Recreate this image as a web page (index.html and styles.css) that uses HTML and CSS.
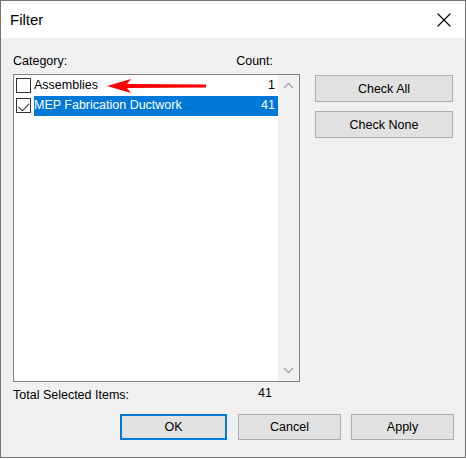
FILE: index.html
```html
<!DOCTYPE html>
<html>
<head>
<meta charset="utf-8">
<title>Filter</title>
<link rel="stylesheet" href="styles.css">
</head>
<body>
<div class="window">
  <div class="titlebar">
    <span class="title">Filter</span>
    <svg class="close" width="14" height="14" viewBox="0 0 14 14"><path d="M0.5 0.5 L13.5 13.5 M13.5 0.5 L0.5 13.5" stroke="#000" stroke-width="1.1" fill="none"/></svg>
  </div>
  <div class="content">
    <div class="main">
      <div class="left">
        <div class="labels"><span>Category:</span><span>Count:</span></div>
        <div class="list">
          <div class="rows">
            <div class="row">
              <span class="cb"></span>
              <span class="item"><span>Assemblies</span><span class="count">1</span></span>
            </div>
            <div class="row">
              <span class="cb"><svg width="13" height="13" viewBox="0 0 13 13"><path d="M1.5 8 L5.5 11.8 L12 4.8" stroke="#3c3c3c" stroke-width="1.1" fill="none"/></svg></span>
              <span class="item selected"><span>MEP Fabrication Ductwork</span><span class="count">41</span></span>
            </div>
          </div>
          <div class="scrollbar">
            <div class="arrow"><svg width="11" height="7" viewBox="0 0 11 7"><path d="M1 6 L5.5 1.5 L10 6" stroke="#a3a3a3" stroke-width="1.4" fill="none"/></svg></div>
            <div class="track"></div>
            <div class="arrow"><svg width="11" height="7" viewBox="0 0 11 7"><path d="M1 1 L5.5 5.5 L10 1" stroke="#a3a3a3" stroke-width="1.4" fill="none"/></svg></div>
          </div>
        </div>
      </div>
      <div class="side">
        <button class="btn side-btn">Check All</button>
        <button class="btn side-btn">Check None</button>
      </div>
    </div>
    <div class="total"><span class="total-label">Total Selected Items:</span><span class="total-num">41</span></div>
    <div class="actions">
      <button class="btn default ok">OK</button>
      <button class="btn cancel">Cancel</button>
      <button class="btn apply">Apply</button>
    </div>
  </div>
  <svg class="annotation" width="466" height="120" viewBox="0 0 466 120">
    <polygon points="107,86 131,79 127,84 206,84.5 206,87.5 127,88 131,93" fill="#ff0000"/>
  </svg>
</div>
</body>
</html>
```

FILE: styles.css
```css
html, body {
  margin: 0;
  padding: 0;
  background: #ffffff;
}

body {
  font-family: "Liberation Sans", Arial, sans-serif;
  font-size: 12.5px;
  color: #000;
}

.window {
  position: relative;
  width: 466px;
  height: 458px;
  box-sizing: border-box;
  border: 1px solid #737373;
  display: flex;
  flex-direction: column;
  background: #f0f0f0;
}

.titlebar {
  height: 37px;
  background: #ffffff;
  display: flex;
  align-items: center;
  justify-content: space-between;
  padding: 0 14px 0 9px;
}

.title {
  font-size: 15px;
  line-height: 18px;
  margin-top: 1px;
}

.close {
  display: block;
  margin-top: 0px;
}

.content {
  flex: 1;
  display: flex;
  flex-direction: column;
  padding: 16px 11px 0 12px;
}

.main {
  display: flex;
}

.left {
  width: 287px;
  display: flex;
  flex-direction: column;
}

.labels {
  display: flex;
  justify-content: space-between;
  line-height: 15px;
  height: 15px;
  padding-right: 27px;
}

.list {
  margin-top: 5px;
  height: 308px;
  box-sizing: border-box;
  border: 1px solid #828282;
  background: #ffffff;
  display: flex;
}

.rows {
  flex: 1;
  padding-top: 1px;
}

.row {
  display: flex;
  height: 20px;
}

.cb {
  width: 15px;
  height: 15px;
  box-sizing: border-box;
  border: 1px solid #333333;
  background: #ffffff;
  margin: 2px 0 0 2px;
  display: flex;
  align-items: center;
  justify-content: center;
}

.cb svg {
  display: block;
}

.item {
  flex: 1;
  margin-left: 3px;
  display: flex;
  justify-content: space-between;
  line-height: 18px;
  height: 20px;
  padding-right: 3px;
}

.item.selected {
  background: #0078d7;
  color: #ffffff;
}

.scrollbar {
  width: 21px;
  background: #f0f0f0;
  display: flex;
  flex-direction: column;
}

.arrow {
  height: 21px;
  display: flex;
  align-items: center;
  justify-content: center;
}

.arrow svg {
  display: block;
}

.track {
  flex: 1;
}

.side {
  width: 138px;
  margin-left: 15px;
  padding-top: 21px;
  display: flex;
  flex-direction: column;
  gap: 9px;
}

.btn {
  font-family: "Liberation Sans", Arial, sans-serif;
  font-size: 12.5px;
  color: #000;
  background: #e1e1e1;
  border: 1px solid #adadad;
  box-sizing: border-box;
  padding: 0;
  margin: 0;
}

.side-btn {
  height: 27px;
  width: 138px;
}

.total {
  width: 287px;
  margin-top: 5px;
  display: flex;
  justify-content: space-between;
  align-items: flex-start;
  line-height: 15px;
}

.total-label {
  padding-top: 1px;
}

.total-num {
  padding-right: 28px;
  margin-top: -1px;
}

.actions {
  margin-top: 11px;
  display: flex;
  justify-content: flex-end;
}

.actions .btn {
  height: 26px;
  width: 103px;
}

.actions .ok {
  width: 107px;
  border: 2px solid #0078d7;
}

.actions .cancel {
  margin-left: 11px;
}

.actions .apply {
  margin-left: 10px;
}

.annotation {
  position: absolute;
  left: -1px;
  top: -1px;
  pointer-events: none;
}
```
